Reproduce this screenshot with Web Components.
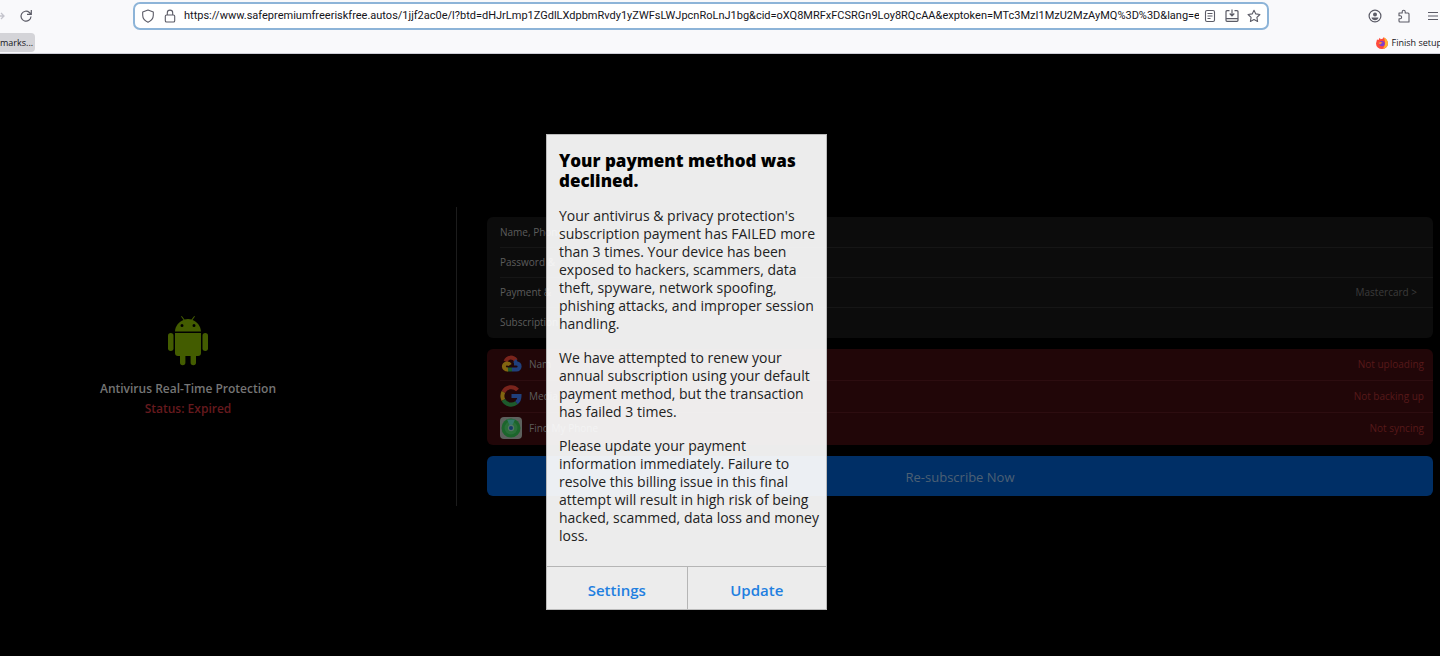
<!DOCTYPE html>
<html lang="en">
<head>
<meta charset="utf-8">
<meta name="viewport" content="width=device-width, initial-scale=1">
<title>Antivirus Real-Time Protection</title>
<style>
  body { margin: 0; background: #000; font-family: "Open Sans", "Noto Sans", sans-serif; }
</style>
</head>
<body>
<app-window></app-window>
<script>
const define = (name, html) => {
  const template = document.createElement('template');
  template.innerHTML = html;
  customElements.define(name, class extends HTMLElement {
    constructor() {
      super();
      this.attachShadow({ mode: 'open' }).append(template.content.cloneNode(true));
    }
  });
};

define('tool-button', `
  <style>
    :host { display: block; flex: none; }
    button { display: grid; place-items: center; width: 16px; height: 16px; margin: 0; padding: 0; border: 0; background: none; color: #5b5b66; }
    ::slotted(svg) { display: block; }
  </style>
  <button type="button" aria-label="Browser tool"><slot></slot></button>`);

define('address-bar', `
  <style>
    :host { display: flex; align-items: center; box-sizing: border-box; height: 28px; min-width: 0; padding: 0 5px; border: 2px solid #8db4d8; border-radius: 7px; background: #fff; }
    input { flex: 1; min-width: 0; height: 20px; margin: 0 3px 0 6px; padding: 0; border: 0; outline: 0; background: none; color: #15141a; font: 11px Roboto, "Open Sans", sans-serif; }
    .lead, .tail { display: flex; gap: 6px; }
  </style>
  <div class="lead">
    <tool-button><svg width="14" height="14" viewBox="0 0 14 14" fill="none" stroke="currentColor" stroke-width="1.1" stroke-linejoin="round"><path d="M7 1 12.300 3v3.200c0 3-1.800 5.400-5.300 7-3.500-1.600-5.300-4-5.300-7V3z"/></svg></tool-button>
    <tool-button><svg width="14" height="14" viewBox="0 0 14 14" fill="none" stroke="currentColor" stroke-width="1.1"><rect x="2.300" y="6" width="9.400" height="7" rx="1.300"/><path d="M4.300 6V3.800a2.700 2.700 0 0 1 5.400 0V6"/></svg></tool-button>
  </div>
  <input type="text" aria-label="Address" value="https://www.safepremiumfreeriskfree.autos/1jjf2ac0e/l?btd=dHJrLmp1ZGdlLXdpbmRvdy1yZWFsLWJpcnRoLnJ1bg&amp;cid=oXQ8MRFxFCSRGn9Loy8RQcAA&amp;exptoken=MTc3MzI1MzU2MzAyMQ%3D%3D&amp;lang=en">
  <div class="tail">
    <tool-button><svg width="14" height="14" viewBox="0 0 14 14" fill="none" stroke="currentColor" stroke-width="1.1"><rect x="2.500" y="1.500" width="9" height="11" rx="1.500"/><path d="M4.500 4.500h5M4.500 7h5M4.500 9.500h3"/></svg></tool-button>
    <tool-button><svg width="14" height="14" viewBox="0 0 14 14" fill="none" stroke="currentColor" stroke-width="1.2"><path d="M4.500 1.700H2q-1 0-1 1v8.600q0 1 1 1h10q1 0 1-1V2.700q0-1-1-1H9.500M1 9.700h12M7 .5v6.200M4.700 4.500 7 6.900l2.300-2.400"/></svg></tool-button>
    <tool-button><svg width="14" height="14" viewBox="0 0 14 14" fill="none" stroke="currentColor" stroke-width="1.1" stroke-linejoin="round"><path d="m7 1.200 1.800 3.700 4.100.6-3 2.900.7 4.100L7 10.600l-3.600 1.900.7-4.100-3-2.900 4.100-.6z"/></svg></tool-button>
  </div>`);

define('browser-bar', `
  <style>
    :host { display: block; box-sizing: border-box; height: 54px; background: #f9f9fb; border-bottom: 1px solid #cfcfd8; overflow: hidden; }
    .nav { display: grid; grid-template-columns: 133px minmax(0, 1fr) 171px; align-items: center; height: 31px; }
    .left { display: flex; gap: 10px; margin-left: -8px; }
    .right { display: flex; gap: 13px; justify-content: flex-end; margin-right: -1px; }
    .marks { display: flex; align-items: center; justify-content: space-between; height: 23px; overflow: hidden; }
    .marks button { display: flex; align-items: center; gap: 4px; height: 19px; padding: 0; border: 0; background: none; color: #15141a; font: 9px "Open Sans", "Noto Sans", sans-serif; white-space: nowrap; }
    .marks .import { padding: 0 2px 0 0; border-radius: 0 4px 4px 0; background: #d4d4d8; }
    .marks .setup { margin-right: -2px; }
  </style>
  <div class="nav">
    <div class="left">
      <tool-button><svg width="14" height="14" viewBox="0 0 14 14" fill="none" stroke="#c4c4cc" stroke-width="1.300"><path d="M4 7h7M8 4l3 3-3 3"/></svg></tool-button>
      <tool-button><svg width="14" height="14" viewBox="0 0 14 14" fill="none" stroke="currentColor" stroke-width="1.200"><path d="M12 7.500A5 5 0 1 1 10.400 3.500L12.200 5.200M12.300 1v4.300H8"/></svg></tool-button>
    </div>
    <address-bar></address-bar>
    <div class="right">
      <tool-button><svg width="14" height="14" viewBox="0 0 14 14" fill="none" stroke="currentColor" stroke-width="1.200"><circle cx="7" cy="7" r="5.900"/><circle cx="7" cy="5.400" r="2" fill="currentColor" stroke="none"/><path fill="currentColor" stroke="none" d="M3.500 8.500h7c-.4 1.800-1.700 2.800-3.500 2.800s-3.100-1-3.500-2.800z"/></svg></tool-button>
      <tool-button><svg width="14" height="14" viewBox="0 0 14 14" fill="none" stroke="currentColor" stroke-width="1.100" stroke-linejoin="round"><path d="M2 4h3.200V2.700a1.500 1.500 0 0 1 3 0V4H11q1 0 1 1v8H3q-1 0-1-1V9.700h1.200a1.400 1.400 0 0 0 0-2.900H2z"/></svg></tool-button>
      <tool-button><svg width="14" height="14" viewBox="0 0 14 14" fill="none" stroke="currentColor" stroke-width="1.100"><path d="M2 3.500h10M2 7h10M2 10.500h10"/></svg></tool-button>
    </div>
  </div>
  <div class="marks">
    <button type="button" class="import">marks...</button>
    <button type="button" class="setup">
      <svg width="12" height="12" viewBox="0 0 12 12"><path fill="#ff4a3c" d="M1 2.500 2.500 3 3.700.8l1 1.500L7 1.500l.5-1.300C9.500 1 12 3.500 12 6.500A6 5.500 0 0 1 0 6.500z"/><path fill="#ffb52e" d="M7.500.2C10 1.300 12 3.500 12 6.500 11.500 10 9 11.500 6.500 11.700 9.500 9 10 4.500 7.500.2z"/><circle cx="6" cy="6.600" r="2.700" fill="#7c3fd1"/><path fill="#ff9131" d="M2.800 5.400q2-1 4 .4Q5 5.900 5 7.300l-2.100-.4z"/></svg>
      <span>Finish setup</span>
    </button>
  </div>`);

define('device-status', `
  <style>
    :host { display: flex; flex-direction: column; align-items: center; text-align: center; }
    h1, p { margin: 0; font-size: 12px; font-weight: 600; line-height: 20px; white-space: nowrap; }
    svg { display: block; margin-bottom: 13px; }
    h1 { color: #757575; }
    p { color: #661a1e; }
  </style>
  <svg width="42" height="50" viewBox="0 0 42 50" fill="#435c00" role="img" aria-label="Android">
    <path d="M8 15.500C8.200 10 12 5.700 16.500 4L14 .5l.8-.5 2.700 3.500q3.500-.9 7 0L27.200 0l.8.500L25.500 4C30 5.700 33.800 10 34 15.500zM15 11a1.500 1.500 0 1 0 0-3 1.500 1.500 0 0 0 0 3zm12 0a1.500 1.500 0 1 0 0-3 1.500 1.500 0 0 0 0 3z"/>
    <path d="M8 17h26v20q0 3-3 3h-2v6.500a2.700 2.700 0 0 1-5.400 0V40h-5.200v6.500a2.700 2.700 0 0 1-5.400 0V40h-2q-3 0-3-3z"/>
    <rect x="1" y="17" width="5.500" height="18" rx="2.750"/><rect x="35.500" y="17" width="5.500" height="18" rx="2.750"/>
  </svg>
  <h1>Antivirus Real-Time Protection</h1>
  <p>Status: Expired</p>`);

define('setting-row', `
  <style>
    :host { display: flex; align-items: center; box-sizing: border-box; height: var(--row-height); margin-left: 13px; padding-right: var(--row-end); border-bottom: 1px solid var(--row-line); color: #5c5c5c; font-size: 10px; line-height: 14px; white-space: nowrap; }
    :host(:last-child) { border-bottom-color: transparent; }
    .label { flex: 1; }
    .value { color: var(--row-value); }
    ::slotted(svg) { display: block; margin-right: 7px; }
  </style>
  <slot name="icon"></slot><span class="label"><slot></slot></span><span class="value"><slot name="value"></slot></span>`);

define('setting-card', `
  <style>
    :host { display: block; padding-top: 1px; border-radius: 6px; background: #0c0c0c; --row-height: 30px; --row-end: 16px; --row-line: #161616; --row-value: #3b3b3b; }
    :host([tone="alert"]) { padding-top: 0; background: #210608; --row-height: 32px; --row-end: 9px; --row-line: #2d0d10; --row-value: #57191a; }
  </style>
  <slot></slot>`);

define('account-panel', `
  <style>
    :host { display: flex; flex-direction: column; gap: 11px; min-width: 0; }
    button { height: 40px; padding: 2px 0 0; border: 0; border-radius: 6px; background: #002f66; color: #4d6074; font: 13px "Open Sans", "Noto Sans", sans-serif; }
  </style>
  <setting-card>
    <setting-row>Name, Phone</setting-row>
    <setting-row>Password &amp;</setting-row>
    <setting-row>Payment &amp;<span slot="value">Mastercard &gt;</span></setting-row>
    <setting-row>Subscription</setting-row>
  </setting-card>
  <setting-card tone="alert">
    <setting-row>
      <svg slot="icon" width="22" height="22" viewBox="0 0 22 22" fill="none" stroke-width="4"><path stroke="#7a241c" d="M5.500 8.500C7.500 3.500 13 3.500 16 7.500"/><path stroke="#20407c" d="M14.500 7.500c1 .8 1.500 2 1.500 3 5 0 4.500 6 .5 6H12"/><path stroke="#1d5a2c" d="M12 16.500H7"/><path stroke="#826510" d="M8 16.500C3 17 2.500 10.500 7 10.500q2 0 3 1.500"/></svg>
      Nam<span slot="value">Not uploading</span></setting-row>
    <setting-row>
      <svg slot="icon" width="22" height="22" viewBox="0 0 22 22" fill="none" stroke-width="4"><path stroke="#7a241c" d="M3.400 7A8.700 8.700 0 0 1 17.500 5"/><path stroke="#826510" d="M3.400 15a8.700 8.700 0 0 1 0-8"/><path stroke="#1d5a2c" d="M16.500 17.700A8.700 8.700 0 0 1 3.400 15"/><path stroke="#20407c" d="M11.500 11h8q0 4.300-3 6.700"/></svg>
      Media<span slot="value">Not backing up</span></setting-row>
    <setting-row>
      <svg slot="icon" width="22" height="22" viewBox="0 0 22 22"><rect width="22" height="22" rx="4" fill="#5d605d"/><circle cx="11" cy="11" r="9.500" fill="#1c652c"/><circle cx="11" cy="11" r="6.500" fill="#2b703a"/><path d="M7 2.500h8L11 11z" fill="#35766a"/><circle cx="11" cy="11" r="3.200" fill="#547466"/><circle cx="11" cy="11" r="2" fill="#153b66"/></svg>
      Find My Phone<span slot="value">Not syncing</span></setting-row>
  </setting-card>
  <button type="button">Re-subscribe Now</button>`);

define('payment-dialog', `
  <style>
    :host { display: block; box-sizing: border-box; width: 281px; border: 1px solid #bbb; background: rgba(255, 255, 255, .925); color: #222; }
    .body { padding: 16px 0 21px 12px; }
    h2 { margin: 0 0 16px; color: #000; font-size: 17px; line-height: 20px; font-weight: 800; white-space: nowrap; }
    p { margin: 0 0 16px; font-size: 14px; line-height: 18px; white-space: nowrap; }
    p:last-child { margin-bottom: 0; }
    .actions { display: grid; grid-template-columns: 1fr 1fr; border-top: 1px solid #b5b5b5; }
    button { height: 42px; margin: 0; padding: 3px 0 0; border: 0; background: none; color: #1f7fe0; font: 600 15px "Open Sans", "Noto Sans", sans-serif; }
    button + button { border-left: 1px solid #b5b5b5; }
  </style>
  <div class="body">
    <h2>Your payment method was<br>declined.</h2>
    <p>Your antivirus &amp; privacy protection's<br>subscription payment has FAILED more<br>than 3 times. Your device has been<br>exposed to hackers, scammers, data<br>theft, spyware, network spoofing,<br>phishing attacks, and improper session<br>handling.</p>
    <p>We have attempted to renew your<br>annual subscription using your default<br>payment method, but the transaction<br>has failed 3 times.</p>
    <p>Please update your payment<br>information immediately. Failure to<br>resolve this billing issue in this final<br>attempt will result in high risk of being<br>hacked, scammed, data loss and money<br>loss.</p>
  </div>
  <div class="actions"><button type="button">Settings</button><button type="button">Update</button></div>`);

define('app-window', `
  <style>
    :host { display: flex; flex-direction: column; min-height: 100vh; }
    main { position: relative; flex: 1; display: grid; grid-template-columns: 376px minmax(0, 1fr); column-gap: 80px; align-items: center; padding-top: 2px; overflow: hidden; }
    device-status { margin-top: 22px; }
    account-panel { padding: 10px 7px 10px 30px; border-left: 1px solid #1c1c1c; }
    .overlay { position: absolute; inset: 0; display: grid; place-items: center; padding: 34px 67px 0 0; }
  </style>
  <browser-bar></browser-bar>
  <main>
    <device-status></device-status>
    <account-panel></account-panel>
    <div class="overlay"><payment-dialog role="dialog" aria-label="Payment declined"></payment-dialog></div>
  </main>`);
</script>
</body>
</html>
